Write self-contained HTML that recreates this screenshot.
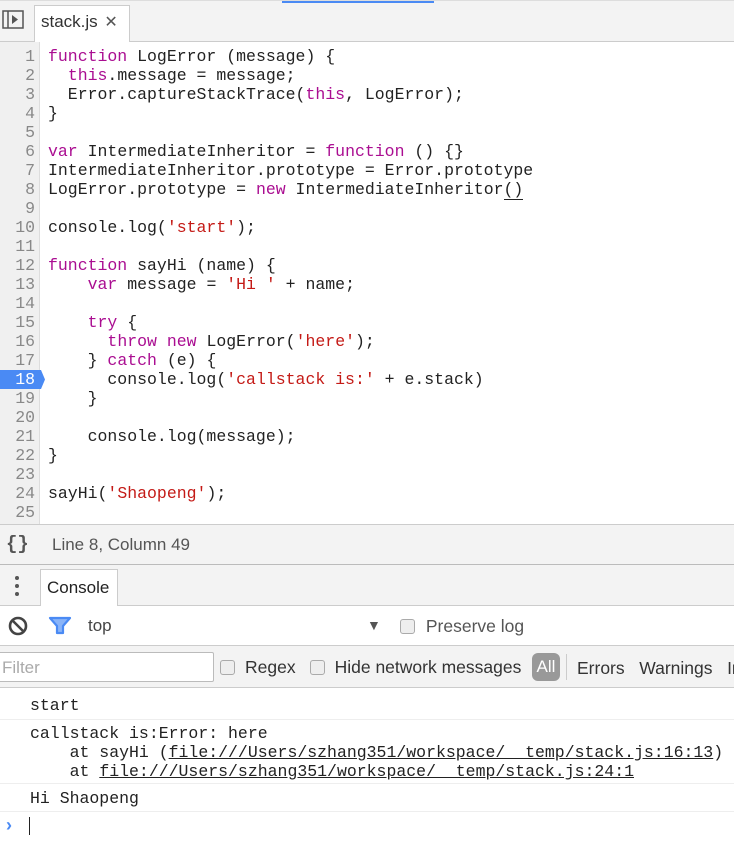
<!DOCTYPE html>
<html><head><style>
*{margin:0;padding:0;box-sizing:border-box}
body{width:734px;height:846px;overflow:hidden;background:#fff;font-family:"Liberation Sans",sans-serif;position:relative}
.abs{position:absolute}
.mono{font-family:"Liberation Mono",monospace;font-size:16.5px}
.ln{position:absolute;left:0;width:35px;text-align:right;color:#888;}
.cd{position:absolute;left:48px;white-space:pre;color:#222}
.k{color:#aa0d91}.s{color:#c41a16}
.cb{display:inline-block;width:15px;height:15px;border:1px solid #aaa;border-radius:3px;background:#eee;vertical-align:-2px}
</style></head><body>
<div class="abs" style="left:0;top:0;width:734px;height:42px;background:#f3f3f3;border-bottom:1px solid #ccc"></div>
<div class="abs" style="left:282px;top:0;width:152px;height:3px;background:#4a8af4"></div>
<div class="abs" style="left:0;top:0;width:734px;height:1px;background:#ddd"></div>
<svg class="abs" style="left:2px;top:10px" width="22" height="20"><rect x="1" y="1" width="20" height="17" fill="none" stroke="#555" stroke-width="1.5"/><line x1="6" y1="1" x2="6" y2="18" stroke="#555" stroke-width="1.5"/><path d="M10 5 L16 9.5 L10 14Z" fill="#555"/></svg>
<div class="abs" style="left:34px;top:5px;width:96px;height:37px;background:#fff;border:1px solid #ccc;border-bottom:none"></div>
<div class="abs" style="left:41px;top:12px;font-size:17px;color:#333">stack.js <span style="color:#555;font-size:16px;margin-left:2px">✕</span></div>
<div class="abs" style="left:0;top:42px;width:40px;height:482px;background:#f0f0f0;border-right:1px solid #ddd"></div>
<div class="abs" style="left:0;top:370px;width:37px;height:19px;background:#4a8af4"></div>
<svg class="abs" style="left:37px;top:370px" width="8" height="19"><path d="M0 0 L4 0 L8 9.5 L4 19 L0 19Z" fill="#4a8af4"/></svg>
<div class="mono abs" style="left:0;top:47px;width:734px;line-height:19px">
<div style="position:relative">
<div class="ln" style="top:0">1</div><div class="cd" style="top:0"><span class="k">function</span> LogError (message) {</div>
<div class="ln" style="top:19px">2</div><div class="cd" style="top:19px">  <span class="k">this</span>.message = message;</div>
<div class="ln" style="top:38px">3</div><div class="cd" style="top:38px">  Error.captureStackTrace(<span class="k">this</span>, LogError);</div>
<div class="ln" style="top:57px">4</div><div class="cd" style="top:57px">}</div>
<div class="ln" style="top:76px">5</div>
<div class="ln" style="top:95px">6</div><div class="cd" style="top:95px"><span class="k">var</span> IntermediateInheritor = <span class="k">function</span> () {}</div>
<div class="ln" style="top:114px">7</div><div class="cd" style="top:114px">IntermediateInheritor.prototype = Error.prototype</div>
<div class="ln" style="top:133px">8</div><div class="cd" style="top:133px">LogError.prototype = <span class="k">new</span> IntermediateInheritor<span style="border-bottom:1px solid #222">()</span></div>
<div class="ln" style="top:152px">9</div>
<div class="ln" style="top:171px">10</div><div class="cd" style="top:171px">console.log(<span class="s">'start'</span>);</div>
<div class="ln" style="top:190px">11</div>
<div class="ln" style="top:209px">12</div><div class="cd" style="top:209px"><span class="k">function</span> sayHi (name) {</div>
<div class="ln" style="top:228px">13</div><div class="cd" style="top:228px">    <span class="k">var</span> message = <span class="s">'Hi '</span> + name;</div>
<div class="ln" style="top:247px">14</div>
<div class="ln" style="top:266px">15</div><div class="cd" style="top:266px">    <span class="k">try</span> {</div>
<div class="ln" style="top:285px">16</div><div class="cd" style="top:285px">      <span class="k">throw</span> <span class="k">new</span> LogError(<span class="s">'here'</span>);</div>
<div class="ln" style="top:304px">17</div><div class="cd" style="top:304px">    } <span class="k">catch</span> (e) {</div>
<div class="ln" style="top:323px;color:#fff">18</div><div class="cd" style="top:323px">      console.log(<span class="s">'callstack is:'</span> + e.stack)</div>
<div class="ln" style="top:342px">19</div><div class="cd" style="top:342px">    }</div>
<div class="ln" style="top:361px">20</div>
<div class="ln" style="top:380px">21</div><div class="cd" style="top:380px">    console.log(message);</div>
<div class="ln" style="top:399px">22</div><div class="cd" style="top:399px">}</div>
<div class="ln" style="top:418px">23</div>
<div class="ln" style="top:437px">24</div><div class="cd" style="top:437px">sayHi(<span class="s">'Shaopeng'</span>);</div>
<div class="ln" style="top:456px">25</div>
</div></div>
<div class="abs" style="left:0;top:524px;width:734px;height:41px;background:#f3f3f3;border-top:1px solid #ccc;border-bottom:1px solid #bbb"></div>
<div class="abs" style="left:6px;top:533px;font-size:19px;font-weight:bold;color:#555;font-family:'Liberation Mono',monospace">{}</div>
<div class="abs" style="left:52px;top:535px;font-size:17px;color:#555">Line 8, Column 49</div>
<div class="abs" style="left:0;top:565px;width:734px;height:41px;background:#f3f3f3;border-bottom:1px solid #ccc"></div>
<svg class="abs" style="left:14px;top:574px" width="6" height="24"><circle cx="3" cy="4" r="2" fill="#555"/><circle cx="3" cy="12" r="2" fill="#555"/><circle cx="3" cy="20" r="2" fill="#555"/></svg>
<div class="abs" style="left:40px;top:569px;width:78px;height:37px;background:#fff;border:1px solid #ccc;border-bottom:none"></div>
<div class="abs" style="left:47px;top:578px;font-size:17px;color:#222">Console</div>
<div class="abs" style="left:0;top:645px;width:734px;height:1px;background:#ccc"></div>
<svg class="abs" style="left:7px;top:615px" width="22" height="22"><circle cx="11" cy="11" r="8" fill="none" stroke="#444" stroke-width="2.6"/><line x1="5.5" y1="5.5" x2="16.5" y2="16.5" stroke="#444" stroke-width="2.6"/></svg>
<svg class="abs" style="left:48px;top:616px" width="24" height="20"><path d="M2 2 H22 L15 10 V17 H9 V10 Z" fill="#8ab4f8" stroke="#4a8af4" stroke-width="2.2" stroke-linejoin="round"/></svg>
<div class="abs" style="left:88px;top:616px;font-size:17px;color:#444">top</div>
<div class="abs" style="left:367px;top:617px;font-size:14px;color:#555">▼</div>
<div class="abs" style="left:400px;top:616px;font-size:17.5px;color:#555"><span class="cb"></span> <span style="margin-left:6px">Preserve log</span></div>
<div class="abs" style="left:0;top:646px;width:734px;height:42px;background:#f3f3f3;border-bottom:1px solid #ccc"></div>
<div class="abs" style="left:-2px;top:652px;width:216px;height:30px;background:#fff;border:1px solid #bbb;border-radius:2px"></div>
<div class="abs" style="left:2px;top:658px;font-size:17px;color:#aaa">Filter</div>
<div class="abs" style="left:220px;top:657px;font-size:17.5px;color:#333;white-space:nowrap"><span class="cb"></span><span style="margin-left:10px">Regex</span><span class="cb" style="margin-left:14px"></span><span style="margin-left:10px">Hide network messages</span></div>
<div class="abs" style="left:532px;top:653px;width:28px;height:28px;background:#999;border-radius:6px;color:#fff;font-size:17px;text-align:center;line-height:28px">All</div>
<div class="abs" style="left:566px;top:654px;width:1px;height:26px;background:#ccc"></div>
<div class="abs" style="left:577px;top:658px;font-size:17.5px;color:#333;white-space:nowrap">Errors&nbsp;&nbsp; Warnings&nbsp;&nbsp; In</div>
<div class="mono abs" style="left:30px;top:696px;color:#222;font-size:16.5px">start</div>
<div class="abs" style="left:0;top:719px;width:734px;height:1px;background:#eee"></div>
<div class="mono abs" style="left:30px;top:724px;color:#222;font-size:16.5px;line-height:19px;white-space:pre">callstack is:Error: here
    at sayHi (<u>file:///Users/szhang351/workspace/__temp/stack.js:16:13</u>)
    at <u>file:///Users/szhang351/workspace/__temp/stack.js:24:1</u></div>
<div class="abs" style="left:0;top:783px;width:734px;height:1px;background:#eee"></div>
<div class="mono abs" style="left:30px;top:789px;color:#222;font-size:16.5px">Hi Shaopeng</div>
<div class="abs" style="left:0;top:811px;width:734px;height:1px;background:#eee"></div>
<div class="abs" style="left:6px;top:815px;color:#4a8af4;font-size:18px;font-weight:bold">›</div>
<div class="abs" style="left:29px;top:817px;width:1px;height:18px;background:#222"></div>
</body></html>
